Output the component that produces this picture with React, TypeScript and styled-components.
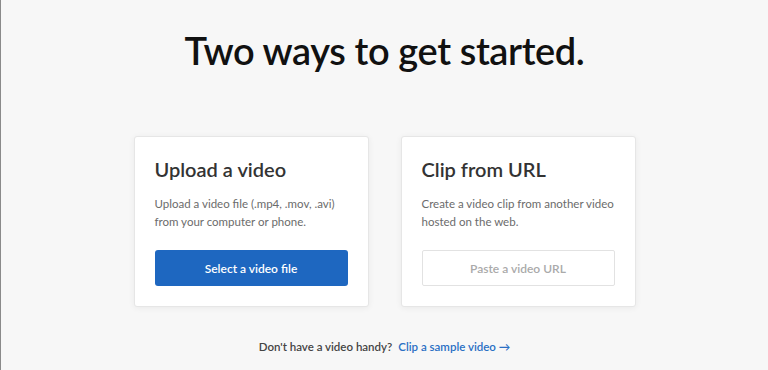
import React from 'react';
import styled, { createGlobalStyle } from 'styled-components';

const GlobalStyle = createGlobalStyle`
  html, body {
    margin: 0;
    padding: 0;
    background: #f7f7f7;
  }
  body {
    font-family: Lato, "Liberation Sans", sans-serif;
  }
`;

function App() {
  return (
    <Page>
      <GlobalStyle />
      <Heading>Two ways to get started.</Heading>
      <Cards>
        <Card>
          <CardTitle>Upload a video</CardTitle>
          <CardText>
            Upload a video file (.mp4, .mov, .avi)
            <br />
            from your computer or phone.
          </CardText>
          <PrimaryBtn>Select a video file</PrimaryBtn>
        </Card>
        <Card>
          <CardTitle>Clip from URL</CardTitle>
          <CardText>
            Create a video clip from another video
            <br />
            hosted on the web.
          </CardText>
          <UrlInput placeholder="Paste a video URL" />
        </Card>
      </Cards>
      <Footer>
        Don't have a video handy?
        <SampleLink href="#">Clip a sample video →</SampleLink>
      </Footer>
    </Page>
  );
}

export default App;

const Page = styled.div`
  box-sizing: border-box;
  height: 370px;
  border-left: 1px solid #8a8a8a;
  display: flex;
  flex-direction: column;
  align-items: center;
  padding-top: 24px;
`;

const Heading = styled.h1`
  margin: 0;
  font-family: Lato, sans-serif;
  font-weight: 600;
  font-size: 38px;
  line-height: 52px;
  color: #111;
  letter-spacing: -0.4px;
`;

const Cards = styled.div`
  display: flex;
  gap: 32px;
  margin-top: 60px;
`;

const Card = styled.div`
  box-sizing: border-box;
  width: 235px;
  height: 171px;
  background: #fff;
  border: 1px solid #e6e6e6;
  border-radius: 3px;
  box-shadow: 0 1px 6px rgba(0, 0, 0, 0.06);
  padding: 19px 20px 0;
  display: flex;
  flex-direction: column;
`;

const CardTitle = styled.h2`
  margin: 0;
  font-size: 20px;
  font-weight: 600;
  line-height: 26px;
  color: #333;
`;

const CardText = styled.p`
  margin: 13px 0 0;
  font-size: 11.5px;
  line-height: 18px;
  color: #6b6b6b;
  white-space: nowrap;
`;

const PrimaryBtn = styled.button`
  margin-top: 19px;
  height: 36px;
  border: none;
  border-radius: 3px;
  background: #1e67c0;
  color: #fff;
  font-family: inherit;
  font-size: 12px;
  font-weight: 600;
  cursor: pointer;
`;

const UrlInput = styled.input`
  box-sizing: border-box;
  margin-top: 19px;
  height: 36px;
  border: 1px solid #e2e2e2;
  border-radius: 2px;
  text-align: center;
  font-family: inherit;
  font-size: 12px;
  font-weight: 600;

  &::placeholder {
    color: #aaa;
  }
`;

const Footer = styled.div`
  margin-top: 33px;
  font-size: 11.5px;
  font-weight: 600;
  color: #444;
`;

const SampleLink = styled.a`
  margin-left: 6px;
  color: #2a6fc4;
  text-decoration: none;
`;
